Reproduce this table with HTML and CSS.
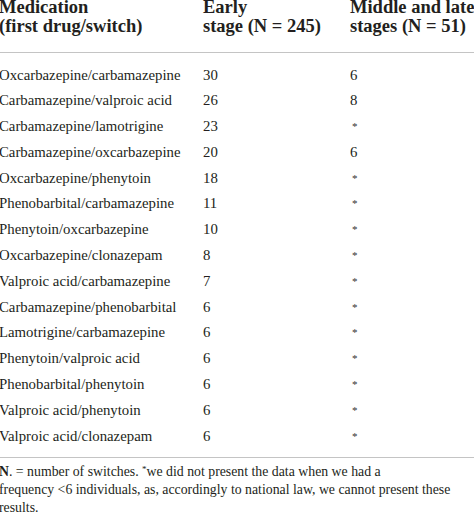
FILE: index.html
```html
<!DOCTYPE html>
<html>
<head>
<meta charset="utf-8">
<link rel="stylesheet" href="styles.css">
</head>
<body>
<div class="page">
  <div class="head grid">
    <div class="cell">Medication<br>(first drug/switch)</div>
    <div class="cell">Early<br>stage (N = 245)</div>
    <div class="cell">Middle and late<br>stages (N = 51)</div>
  </div>
  <div class="body">
    <div class="row grid"><span>Oxcarbazepine/carbamazepine</span><span>30</span><span>6</span></div>
    <div class="row grid"><span>Carbamazepine/valproic acid</span><span>26</span><span>8</span></div>
    <div class="row grid"><span>Carbamazepine/lamotrigine</span><span>23</span><span class="ast">*</span></div>
    <div class="row grid"><span>Carbamazepine/oxcarbazepine</span><span>20</span><span>6</span></div>
    <div class="row grid"><span>Oxcarbazepine/phenytoin</span><span>18</span><span class="ast">*</span></div>
    <div class="row grid"><span>Phenobarbital/carbamazepine</span><span>11</span><span class="ast">*</span></div>
    <div class="row grid"><span>Phenytoin/oxcarbazepine</span><span>10</span><span class="ast">*</span></div>
    <div class="row grid"><span>Oxcarbazepine/clonazepam</span><span>8</span><span class="ast">*</span></div>
    <div class="row grid"><span>Valproic acid/carbamazepine</span><span>7</span><span class="ast">*</span></div>
    <div class="row grid"><span>Carbamazepine/phenobarbital</span><span>6</span><span class="ast">*</span></div>
    <div class="row grid"><span>Lamotrigine/carbamazepine</span><span>6</span><span class="ast">*</span></div>
    <div class="row grid"><span>Phenytoin/valproic acid</span><span>6</span><span class="ast">*</span></div>
    <div class="row grid"><span>Phenobarbital/phenytoin</span><span>6</span><span class="ast">*</span></div>
    <div class="row grid"><span>Valproic acid/phenytoin</span><span>6</span><span class="ast">*</span></div>
    <div class="row grid"><span>Valproic acid/clonazepam</span><span>6</span><span class="ast">*</span></div>
  </div>
  <p class="foot"><b>N</b>. = number of switches. <sup>*</sup>we did not present the data when we had a<br>frequency &lt;6 individuals, as, accordingly to national law, we cannot present these<br>results.</p>
</div>
</body>
</html>
```
FILE: styles.css
```css
html, body {
  margin: 0;
  padding: 0;
  background: #ffffff;
}
body {
  width: 474px;
  height: 518px;
  overflow: hidden;
  font-family: "Liberation Serif", "Times New Roman", serif;
  color: #231f20;
}
.page {
  margin-left: -1px;
  width: 476px;
}
.grid {
  display: grid;
  grid-template-columns: 204px 147px 1fr;
}
.head {
  margin-top: -2px;
  font-weight: bold;
  font-size: 18.5px;
  line-height: 19px;
  padding-bottom: 16px;
  border-bottom: 1.5px solid #c4c4c4;
  white-space: nowrap;
}
.body {
  padding: 9.5px 0 8px;
  border-bottom: 1.5px solid #c4c4c4;
}
.row {
  font-size: 14.8px;
  height: 25.8px;
  line-height: 25.8px;
  white-space: nowrap;
}
.ast {
  font-size: 11px;
  padding-left: 2px;
  color: #333;
}
.foot {
  margin: 0;
  padding-top: 4.5px;
  font-size: 13.8px;
  line-height: 18px;
  white-space: nowrap;
}
.foot sup {
  font-size: 9px;
  vertical-align: 4px;
  line-height: 0;
}
```
